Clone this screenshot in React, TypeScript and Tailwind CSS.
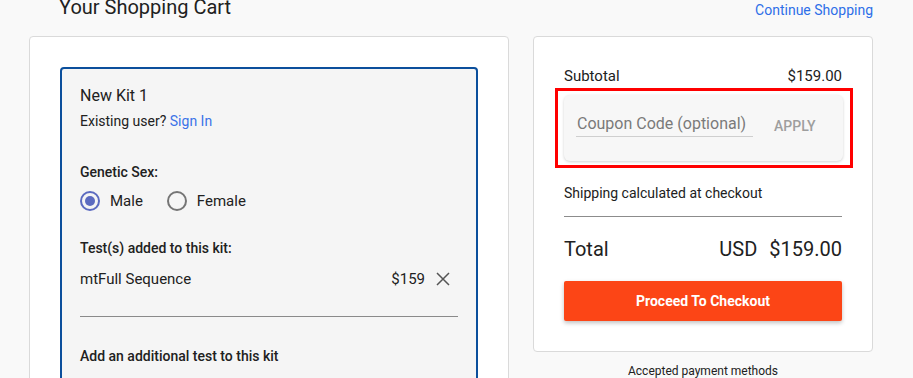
import React from "react";

function Radio({ checked, label }: { checked?: boolean; label: string }) {
  return (
    <label className="flex items-center gap-[10px]">
      <span
        className={`flex h-5 w-5 items-center justify-center rounded-full border-2 ${
          checked ? "border-[#5c6bc0]" : "border-[#757575]"
        }`}
      >
        {checked && <span className="h-[10px] w-[10px] rounded-full bg-[#5c6bc0]" />}
      </span>
      <span className="text-[15px] leading-[22px] text-[#212121]">{label}</span>
    </label>
  );
}

function KitBox() {
  return (
    <div className="rounded-[4px] border-2 border-[#0b4f9c] bg-[#f5f5f5] px-[18px] pb-[40px] pt-[15px]">
      <div className="text-[16px] leading-6 text-[#212121]">New Kit 1</div>
      <div className="mt-[3px] text-[14px] leading-5 text-[#212121]">
        Existing user? <a className="text-[#3b73e8]">Sign In</a>
      </div>

      <div className="mt-[31px] text-[14px] font-medium leading-5 text-[#212121]">Genetic Sex:</div>
      <div className="mt-[7px] flex h-6 items-center gap-[24px]">
        <Radio checked label="Male" />
        <Radio label="Female" />
      </div>

      <div className="mt-[25px] text-[14px] font-medium leading-5 text-[#212121]">
        Test(s) added to this kit:
      </div>
      <div className="mt-[10px] flex items-center justify-between text-[15px] leading-[22px] text-[#212121]">
        <span>mtFull Sequence</span>
        <div className="mr-[8px] flex items-center gap-[11px]">
          <span>$159</span>
          <svg width="14" height="14" viewBox="0 0 14 14" className="text-[#555]">
            <path d="M1 1L13 13M13 1L1 13" stroke="currentColor" strokeWidth="1.5" fill="none" />
          </svg>
        </div>
      </div>

      <div className="mt-[26px] h-px bg-[#8a8a8a]" />

      <div className="mt-[29px] text-[14px] font-medium leading-5 text-[#212121]">
        Add an additional test to this kit
      </div>
    </div>
  );
}

function Summary() {
  return (
    <div className="w-[340px] shrink-0">
      <div className="rounded-[4px] border border-[#dadada] bg-white px-[30px] pb-[30px] pt-[28px]">
        <div className="flex justify-between text-[15px] leading-[22px] text-[#212121]">
          <span>Subtotal</span>
          <span>$159.00</span>
        </div>

        <div className="-ml-[9px] -mr-[11px] mt-px border-[3px] border-[#ff0000] pb-[4px] pl-[6px] pr-[7px] pt-[4px]">
          <div className="flex h-[66px] items-start rounded-[6px] bg-[#f7f7f7] pl-[12px] pt-[17px] shadow-[0_1px_3px_rgba(0,0,0,0.18)]">
            <div className="w-[177px] border-b border-[#cfcfcf] pl-px text-[16px] leading-6 text-[#7a7a7a]">
              Coupon Code (optional)
            </div>
            <button className="ml-[21px] mt-[4px] text-[14px] font-medium uppercase leading-5 text-[#9e9e9e]">
              Apply
            </button>
          </div>
        </div>

        <div className="mt-[15px] text-[14px] leading-5 text-[#212121]">
          Shipping calculated at checkout
        </div>
        <div className="mt-[13px] h-px bg-[#8c8c8c]" />

        <div className="mt-[18px] flex justify-between text-[20px] leading-[28px] text-[#212121]">
          <span>Total</span>
          <span className="flex gap-[12px]">
            <span>USD</span>
            <span>$159.00</span>
          </span>
        </div>

        <button className="mt-[18px] flex h-10 w-full items-center justify-center rounded-[2px] bg-[#fc4516] text-[14px] font-bold text-white shadow-[0_2px_4px_rgba(0,0,0,0.25)]">
          Proceed To Checkout
        </button>
      </div>
      <div className="mt-[9px] text-center text-[12px] leading-5 text-[#212121]">Accepted payment methods</div>
    </div>
  );
}

export default function App() {
  return (
    <div className="min-h-screen overflow-hidden bg-[#f9f9f9] pl-[29px] pr-[40px] font-['Roboto',sans-serif]">
      <div className="flex h-[36px] justify-between">
        <h1 className="-mt-[5px] ml-[30px] text-[20px] font-normal leading-6 text-[#212121]">
          Your Shopping Cart
        </h1>
        <a className="text-[14px] leading-5 text-[#2d6fe8]">Continue Shopping</a>
      </div>

      <div className="flex items-start gap-[24px]">
        <div className="w-[480px] shrink-0 rounded-[4px] border border-[#dadada] bg-white px-[30px] pb-[30px] pt-[30px]">
          <KitBox />
        </div>
        <Summary />
      </div>
    </div>
  );
}
